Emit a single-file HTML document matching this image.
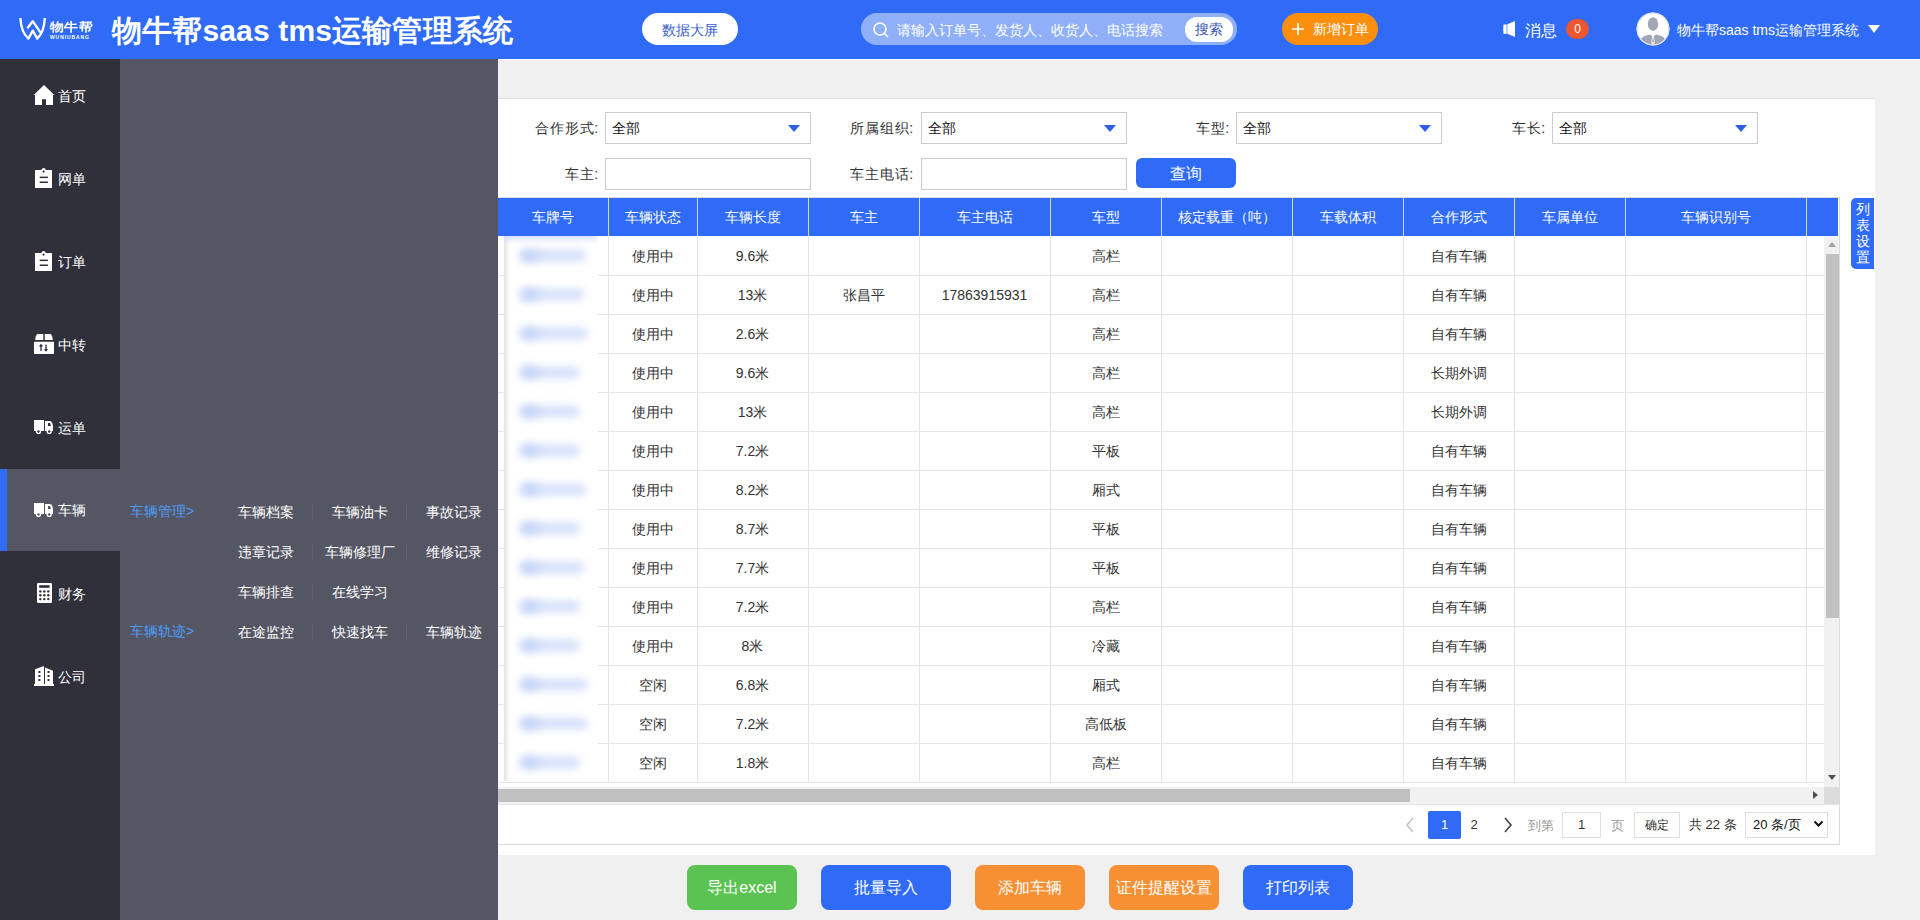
<!DOCTYPE html>
<html><head><meta charset="utf-8">
<style>
*{margin:0;padding:0;box-sizing:border-box;}
html,body{width:1920px;height:920px;overflow:hidden;background:#f0f0f0;font-family:"Liberation Sans",sans-serif;font-size:14px;color:#333;}
.abs{position:absolute;}
#hdr{position:absolute;left:0;top:0;width:1920px;height:59px;background:#2f6bf6;}
#side{position:absolute;left:0;top:59px;width:120px;height:861px;background:#30303a;}
#sub{position:absolute;left:120px;top:59px;width:378px;height:861px;background:#555663;}
.nav{position:absolute;left:0;width:120px;height:83px;color:#fff;font-size:14px;}
.nav .t{position:absolute;left:58px;top:50%;transform:translateY(-50%);line-height:16px;}
.nav svg{position:absolute;left:34px;top:50%;transform:translateY(-50%);}
.nav.on{background:#555663;}
.nav.on:before{content:"";position:absolute;left:0;top:0;width:7px;height:100%;background:#2f6bf6;}
.sm{position:absolute;color:#fff;font-size:14px;line-height:16px;}
.smh{position:absolute;color:#4d9cf8;font-size:14px;line-height:16px;}
.sep{position:absolute;width:1px;height:16px;background:#62636f;}
#panel{position:absolute;left:498px;top:98px;width:1377px;height:757px;background:#fff;border-top:1px solid #ddd;}
.lbl{position:absolute;font-size:14px;color:#333;text-align:right;line-height:16px;letter-spacing:0.8px;}
.sel{position:absolute;width:206px;height:32px;border:1px solid #ccc;background:#fff;font-size:14px;color:#111;line-height:30px;padding-left:6px;}
.sel:after{content:"";position:absolute;right:10px;top:12px;border-left:6px solid transparent;border-right:6px solid transparent;border-top:7px solid #2f5ee8;}
.inp{position:absolute;width:206px;height:32px;border:1px solid #ccc;background:#fff;}
#thead{position:absolute;left:498px;top:198px;width:1340px;height:38px;background:#2f6bf6;}
.th{position:absolute;top:0;height:38px;line-height:38px;text-align:center;color:#fff;font-size:14px;border-right:1px solid #c9d6f5;}
.row{position:absolute;left:498px;width:1308px;height:39px;border-bottom:1px solid #e4e4e4;}
.td{position:absolute;top:0;height:39px;line-height:38px;text-align:center;color:#333;font-size:14px;border-right:1px solid #e4e4e4;}
.btn{position:absolute;top:865px;height:45px;border-radius:8px;color:#fff;font-size:16px;line-height:45px;text-align:center;}
</style></head><body>

<div id="hdr">
  <!-- logo -->
  <svg class="abs" style="left:0;top:0" width="60" height="59" viewBox="0 0 60 59">
    <path d="M20.4 18 Q21 32 28.4 38.6 L32.8 30.6 L37.3 38.6 Q44.2 32 44.8 18" fill="none" stroke="#fff" stroke-width="2.3" stroke-linejoin="round"/>
    <path d="M27.3 28.3 L32.7 21.2 L40.6 32.6" fill="none" stroke="#fff" stroke-width="2.3" stroke-linejoin="round"/>
  </svg>
  <div class="abs" style="left:50px;top:20px;color:#fff;font-size:14px;font-weight:bold;line-height:14px;letter-spacing:0px;transform-origin:0 0;transform:scale(1.02,0.88);">物牛帮</div>
  <div class="abs" style="left:50px;top:35px;color:#fff;font-size:5px;font-weight:bold;line-height:5px;letter-spacing:0.9px;">WUNIUBANG</div>
  <div class="abs" style="left:112px;top:14px;color:#fff;font-size:30px;font-weight:bold;line-height:34px;letter-spacing:0.15px;">物牛帮saas tms运输管理系统</div>

  <div class="abs" style="left:642px;top:13px;width:96px;height:32px;border-radius:16px;background:#fff;color:#3b5fcf;font-size:14px;line-height:34px;text-align:center;">数据大屏</div>

  <div class="abs" style="left:861px;top:13px;width:376px;height:32px;border-radius:16px;background:#8fb0f9;"></div>
  <svg class="abs" style="left:872px;top:21px" width="18" height="18" viewBox="0 0 18 18"><circle cx="8" cy="8" r="6" fill="none" stroke="#fff" stroke-width="1.6"/><path d="M12.5 12.5 L16 16" stroke="#fff" stroke-width="1.6"/></svg>
  <div class="abs" style="left:897px;top:22px;color:#fff;font-size:14px;line-height:16px;">请输入订单号、发货人、收货人、电话搜索</div>
  <div class="abs" style="left:1185px;top:17px;width:48px;height:25px;border-radius:12px;background:#fff;color:#3a56b4;font-size:14px;line-height:25px;text-align:center;">搜索</div>

  <div class="abs" style="left:1282px;top:13px;width:96px;height:32px;border-radius:16px;background:#fc8f0e;color:#fff;font-size:14px;line-height:32px;text-align:center;">
    <svg style="position:absolute;left:10px;top:10px" width="12" height="12" viewBox="0 0 12 12"><path d="M6 0 V12 M0 6 H12" stroke="#fff" stroke-width="1.7"/></svg><span style="position:absolute;left:31px;top:0">新增订单</span></div>

  <svg class="abs" style="left:1502px;top:20px" width="15" height="18" viewBox="0 0 15 18"><path d="M1.5 4.5 H4.6 V14 H1.5 Q0.8 9.2 1.5 4.5Z" fill="#fff"/><path d="M5.3 4.3 L13 1 V17 L5.3 13.7Z" fill="#fff"/></svg>
  <div class="abs" style="left:1525px;top:22px;color:#fff;font-size:16px;line-height:18px;">消息</div>
  <div class="abs" style="left:1566px;top:19px;width:23px;height:20px;border-radius:10px;background:#ec5630;color:#fff;font-size:12px;line-height:20px;text-align:center;">0</div>

  <svg class="abs" style="left:1636px;top:12px" width="34" height="34" viewBox="0 0 34 34">
    <defs><clipPath id="avc"><circle cx="17" cy="17" r="15.5"/></clipPath></defs>
    <circle cx="17" cy="17" r="16.5" fill="#fff"/>
    <g clip-path="url(#avc)">
    <ellipse cx="17" cy="12" rx="5.2" ry="6.8" fill="#a3a6b4"/>
    <path d="M3 34 Q4 25 10 23.5 L14 22.5 L17 25 L20 22.5 L24 23.5 Q30 25 31 34Z" fill="#a3a6b4"/>
    <path d="M16 24.5 L18 24.5 L18.6 31 L17 32.5 L15.4 31Z" fill="#fff"/>
    <path d="M16.5 26 L17.5 26 L17.8 30 L17 31 L16.2 30Z" fill="#a3a6b4"/>
    </g>
    <circle cx="17" cy="17" r="16" fill="none" stroke="#d6d8e2" stroke-width="1"/>
  </svg>
  <div class="abs" style="left:1677px;top:22px;color:#fff;font-size:14px;line-height:16px;">物牛帮saas tms运输管理系统</div>
  <div class="abs" style="left:1868px;top:25px;border-left:6px solid transparent;border-right:6px solid transparent;border-top:8px solid #fff;"></div>
</div>

<div id="side">
  <div class="nav" style="top:-5px"><span class="t">首页</span></div>
  <div class="nav" style="top:78px"><span class="t">网单</span></div>
  <div class="nav" style="top:161px"><span class="t">订单</span></div>
  <div class="nav" style="top:244px"><span class="t">中转</span></div>
  <div class="nav" style="top:327px"><span class="t">运单</span></div>
  <div class="nav on" style="top:410px;height:82px"><span class="t">车辆</span></div>
  <div class="nav" style="top:493px"><span class="t">财务</span></div>
  <div class="nav" style="top:576px"><span class="t">公司</span></div>
</div>

<svg class="abs" style="left:0;top:0;pointer-events:none" width="120" height="920" viewBox="0 0 120 920">
<path d="M44 85 L54.3 95 H53 V105 H46 V99.2 H42 V105 H35 V95 H33.7Z" fill="#fff"/>
<path d="M35 170 H41.2 Q42 168 43.6 168 Q45.2 168 46 170 H52 V188 H35Z" fill="#fff"/>
<circle cx="43.6" cy="171.6" r="1.1" fill="#30303a"/>
<rect x="39.7" y="176.6" width="8.2" height="1.5" fill="#30303a"/>
<rect x="39.7" y="181.5" width="8.2" height="1.5" fill="#30303a"/>
<path d="M35 253 H41.2 Q42 251 43.6 251 Q45.2 251 46 253 H52 V271 H35Z" fill="#fff"/>
<circle cx="43.6" cy="254.6" r="1.1" fill="#30303a"/>
<rect x="39.7" y="259.6" width="8.2" height="1.5" fill="#30303a"/>
<rect x="39.7" y="264.5" width="8.2" height="1.5" fill="#30303a"/>
<path d="M37 334 H43.3 V340 H35.2 Q35.5 336 37 334Z M44.8 334 H51 Q52.5 336 52.8 340 H44.8Z" fill="#fff"/>
<rect x="34" y="341.7" width="20" height="12.3" rx="0.8" fill="#fff"/>
<path d="M41 351 V345 M39.6 346.4 L41 344.8 L42.4 346.4 M46 344.5 V350.5 M44.6 349.1 L46 350.7 L47.4 349.1" stroke="#30303a" stroke-width="1.3" fill="none"/>
<path d="M34 420 H44 V431 H34Z" fill="#fff"/>
<path d="M45 421 H50 Q51.5 421 52.2 423 L53 426 V431 H45Z" fill="#fff"/>
<path d="M48 423 H50 L51 426 H48Z" fill="#30303a"/>
<circle cx="38.5" cy="431.5" r="2.6" fill="#fff"/><circle cx="38.5" cy="431.5" r="1.2" fill="#30303a"/>
<circle cx="49.2" cy="431.5" r="2.6" fill="#fff"/><circle cx="49.2" cy="431.5" r="1.2" fill="#30303a"/>
<path d="M34 503 H44 V514 H34Z" fill="#fff"/>
<path d="M45 504 H50 Q51.5 504 52.2 506 L53 509 V514 H45Z" fill="#fff"/>
<path d="M48 506 H50 L51 509 H48Z" fill="#555663"/>
<circle cx="38.5" cy="514.5" r="2.6" fill="#fff"/><circle cx="38.5" cy="514.5" r="1.2" fill="#555663"/>
<circle cx="49.2" cy="514.5" r="2.6" fill="#fff"/><circle cx="49.2" cy="514.5" r="1.2" fill="#555663"/>
<rect x="37" y="583" width="15" height="20" rx="1.2" fill="#fff"/>
<rect x="39.2" y="585.2" width="10.4" height="2.6" fill="#30303a"/>
<circle cx="40.3" cy="591.4" r="1.2" fill="#30303a"/><circle cx="40.3" cy="595.3" r="1.2" fill="#30303a"/><circle cx="40.3" cy="599.1" r="1.2" fill="#30303a"/><circle cx="44.3" cy="591.4" r="1.2" fill="#30303a"/><circle cx="44.3" cy="595.3" r="1.2" fill="#30303a"/><circle cx="44.3" cy="599.1" r="1.2" fill="#30303a"/><circle cx="48.3" cy="591.4" r="1.2" fill="#30303a"/><circle cx="48.3" cy="595.3" r="1.2" fill="#30303a"/><circle cx="48.3" cy="599.1" r="1.2" fill="#30303a"/>
<path d="M35 669.3 L44 666 V684 H35Z M45 667.4 L53 670.8 V684 H45Z" fill="#fff"/>
<rect x="34" y="684" width="20" height="2" fill="#fff"/>
<rect x="38.4" y="671" width="2" height="2" fill="#30303a"/><rect x="38.4" y="675" width="2" height="2" fill="#30303a"/><rect x="38.4" y="679" width="2" height="2" fill="#30303a"/><rect x="47.5" y="671" width="2" height="2" fill="#30303a"/><rect x="47.5" y="675" width="2" height="2" fill="#30303a"/><rect x="47.5" y="679" width="2" height="2" fill="#30303a"/>
</svg>
<div id="sub">
  <div class="smh" style="left:10px;top:444px">车辆管理&gt;</div>
  <div class="smh" style="left:10px;top:564px">车辆轨迹&gt;</div>
</div>

<div class="abs" style="left:498px;top:59px;width:1422px;height:1px;background:#fafeff"></div>
<div id="panel"></div>
<div class="lbl" style="left:479px;width:120px;top:120px">合作形式:</div>
<div class="sel" style="left:605px;top:112px">全部</div>
<div class="lbl" style="left:794px;width:120px;top:120px">所属组织:</div>
<div class="sel" style="left:921px;top:112px">全部</div>
<div class="lbl" style="left:1110px;width:120px;top:120px">车型:</div>
<div class="sel" style="left:1236px;top:112px">全部</div>
<div class="lbl" style="left:1426px;width:120px;top:120px">车长:</div>
<div class="sel" style="left:1552px;top:112px">全部</div>
<div class="lbl" style="left:479px;width:120px;top:166px">车主:</div>
<div class="inp" style="left:605px;top:158px"></div>
<div class="lbl" style="left:794px;width:120px;top:166px">车主电话:</div>
<div class="inp" style="left:921px;top:158px"></div>
<div class="abs" style="left:1136px;top:158px;width:100px;height:30px;border-radius:6px;background:#2f6bf6;color:#fff;font-size:16px;line-height:31px;text-align:center;">查询</div>
<div class="abs" style="left:498px;top:197px;width:1342px;height:648px;border:1px solid #dcdcdc;border-left:none;background:#fff"></div>
<div id="thead"><div class="th" style="left:0px;width:111px;">车牌号</div><div class="th" style="left:110px;width:90px;">车辆状态</div><div class="th" style="left:199px;width:112px;">车辆长度</div><div class="th" style="left:310px;width:112px;">车主</div><div class="th" style="left:421px;width:132px;">车主电话</div><div class="th" style="left:552px;width:112px;">车型</div><div class="th" style="left:663px;width:132px;">核定载重（吨）</div><div class="th" style="left:794px;width:112px;">车载体积</div><div class="th" style="left:905px;width:112px;">合作形式</div><div class="th" style="left:1016px;width:112px;">车属单位</div><div class="th" style="left:1127px;width:182px;">车辆识别号</div><div class="th" style="left:1308px;width:34px;border-right:none;"></div></div>
<div class="row" style="top:237px;width:1326px"><div class="td" style="left:0px;width:111px;"></div><div class="td" style="left:110px;width:90px;">使用中</div><div class="td" style="left:199px;width:112px;">9.6米</div><div class="td" style="left:310px;width:112px;"></div><div class="td" style="left:421px;width:132px;"></div><div class="td" style="left:552px;width:112px;">高栏</div><div class="td" style="left:663px;width:132px;"></div><div class="td" style="left:794px;width:112px;"></div><div class="td" style="left:905px;width:112px;">自有车辆</div><div class="td" style="left:1016px;width:112px;"></div><div class="td" style="left:1127px;width:182px;"></div><div class="td" style="left:1308px;width:19px;"></div></div>
<div class="row" style="top:276px;width:1326px"><div class="td" style="left:0px;width:111px;"></div><div class="td" style="left:110px;width:90px;">使用中</div><div class="td" style="left:199px;width:112px;">13米</div><div class="td" style="left:310px;width:112px;">张昌平</div><div class="td" style="left:421px;width:132px;">17863915931</div><div class="td" style="left:552px;width:112px;">高栏</div><div class="td" style="left:663px;width:132px;"></div><div class="td" style="left:794px;width:112px;"></div><div class="td" style="left:905px;width:112px;">自有车辆</div><div class="td" style="left:1016px;width:112px;"></div><div class="td" style="left:1127px;width:182px;"></div><div class="td" style="left:1308px;width:19px;"></div></div>
<div class="row" style="top:315px;width:1326px"><div class="td" style="left:0px;width:111px;"></div><div class="td" style="left:110px;width:90px;">使用中</div><div class="td" style="left:199px;width:112px;">2.6米</div><div class="td" style="left:310px;width:112px;"></div><div class="td" style="left:421px;width:132px;"></div><div class="td" style="left:552px;width:112px;">高栏</div><div class="td" style="left:663px;width:132px;"></div><div class="td" style="left:794px;width:112px;"></div><div class="td" style="left:905px;width:112px;">自有车辆</div><div class="td" style="left:1016px;width:112px;"></div><div class="td" style="left:1127px;width:182px;"></div><div class="td" style="left:1308px;width:19px;"></div></div>
<div class="row" style="top:354px;width:1326px"><div class="td" style="left:0px;width:111px;"></div><div class="td" style="left:110px;width:90px;">使用中</div><div class="td" style="left:199px;width:112px;">9.6米</div><div class="td" style="left:310px;width:112px;"></div><div class="td" style="left:421px;width:132px;"></div><div class="td" style="left:552px;width:112px;">高栏</div><div class="td" style="left:663px;width:132px;"></div><div class="td" style="left:794px;width:112px;"></div><div class="td" style="left:905px;width:112px;">长期外调</div><div class="td" style="left:1016px;width:112px;"></div><div class="td" style="left:1127px;width:182px;"></div><div class="td" style="left:1308px;width:19px;"></div></div>
<div class="row" style="top:393px;width:1326px"><div class="td" style="left:0px;width:111px;"></div><div class="td" style="left:110px;width:90px;">使用中</div><div class="td" style="left:199px;width:112px;">13米</div><div class="td" style="left:310px;width:112px;"></div><div class="td" style="left:421px;width:132px;"></div><div class="td" style="left:552px;width:112px;">高栏</div><div class="td" style="left:663px;width:132px;"></div><div class="td" style="left:794px;width:112px;"></div><div class="td" style="left:905px;width:112px;">长期外调</div><div class="td" style="left:1016px;width:112px;"></div><div class="td" style="left:1127px;width:182px;"></div><div class="td" style="left:1308px;width:19px;"></div></div>
<div class="row" style="top:432px;width:1326px"><div class="td" style="left:0px;width:111px;"></div><div class="td" style="left:110px;width:90px;">使用中</div><div class="td" style="left:199px;width:112px;">7.2米</div><div class="td" style="left:310px;width:112px;"></div><div class="td" style="left:421px;width:132px;"></div><div class="td" style="left:552px;width:112px;">平板</div><div class="td" style="left:663px;width:132px;"></div><div class="td" style="left:794px;width:112px;"></div><div class="td" style="left:905px;width:112px;">自有车辆</div><div class="td" style="left:1016px;width:112px;"></div><div class="td" style="left:1127px;width:182px;"></div><div class="td" style="left:1308px;width:19px;"></div></div>
<div class="row" style="top:471px;width:1326px"><div class="td" style="left:0px;width:111px;"></div><div class="td" style="left:110px;width:90px;">使用中</div><div class="td" style="left:199px;width:112px;">8.2米</div><div class="td" style="left:310px;width:112px;"></div><div class="td" style="left:421px;width:132px;"></div><div class="td" style="left:552px;width:112px;">厢式</div><div class="td" style="left:663px;width:132px;"></div><div class="td" style="left:794px;width:112px;"></div><div class="td" style="left:905px;width:112px;">自有车辆</div><div class="td" style="left:1016px;width:112px;"></div><div class="td" style="left:1127px;width:182px;"></div><div class="td" style="left:1308px;width:19px;"></div></div>
<div class="row" style="top:510px;width:1326px"><div class="td" style="left:0px;width:111px;"></div><div class="td" style="left:110px;width:90px;">使用中</div><div class="td" style="left:199px;width:112px;">8.7米</div><div class="td" style="left:310px;width:112px;"></div><div class="td" style="left:421px;width:132px;"></div><div class="td" style="left:552px;width:112px;">平板</div><div class="td" style="left:663px;width:132px;"></div><div class="td" style="left:794px;width:112px;"></div><div class="td" style="left:905px;width:112px;">自有车辆</div><div class="td" style="left:1016px;width:112px;"></div><div class="td" style="left:1127px;width:182px;"></div><div class="td" style="left:1308px;width:19px;"></div></div>
<div class="row" style="top:549px;width:1326px"><div class="td" style="left:0px;width:111px;"></div><div class="td" style="left:110px;width:90px;">使用中</div><div class="td" style="left:199px;width:112px;">7.7米</div><div class="td" style="left:310px;width:112px;"></div><div class="td" style="left:421px;width:132px;"></div><div class="td" style="left:552px;width:112px;">平板</div><div class="td" style="left:663px;width:132px;"></div><div class="td" style="left:794px;width:112px;"></div><div class="td" style="left:905px;width:112px;">自有车辆</div><div class="td" style="left:1016px;width:112px;"></div><div class="td" style="left:1127px;width:182px;"></div><div class="td" style="left:1308px;width:19px;"></div></div>
<div class="row" style="top:588px;width:1326px"><div class="td" style="left:0px;width:111px;"></div><div class="td" style="left:110px;width:90px;">使用中</div><div class="td" style="left:199px;width:112px;">7.2米</div><div class="td" style="left:310px;width:112px;"></div><div class="td" style="left:421px;width:132px;"></div><div class="td" style="left:552px;width:112px;">高栏</div><div class="td" style="left:663px;width:132px;"></div><div class="td" style="left:794px;width:112px;"></div><div class="td" style="left:905px;width:112px;">自有车辆</div><div class="td" style="left:1016px;width:112px;"></div><div class="td" style="left:1127px;width:182px;"></div><div class="td" style="left:1308px;width:19px;"></div></div>
<div class="row" style="top:627px;width:1326px"><div class="td" style="left:0px;width:111px;"></div><div class="td" style="left:110px;width:90px;">使用中</div><div class="td" style="left:199px;width:112px;">8米</div><div class="td" style="left:310px;width:112px;"></div><div class="td" style="left:421px;width:132px;"></div><div class="td" style="left:552px;width:112px;">冷藏</div><div class="td" style="left:663px;width:132px;"></div><div class="td" style="left:794px;width:112px;"></div><div class="td" style="left:905px;width:112px;">自有车辆</div><div class="td" style="left:1016px;width:112px;"></div><div class="td" style="left:1127px;width:182px;"></div><div class="td" style="left:1308px;width:19px;"></div></div>
<div class="row" style="top:666px;width:1326px"><div class="td" style="left:0px;width:111px;"></div><div class="td" style="left:110px;width:90px;">空闲</div><div class="td" style="left:199px;width:112px;">6.8米</div><div class="td" style="left:310px;width:112px;"></div><div class="td" style="left:421px;width:132px;"></div><div class="td" style="left:552px;width:112px;">厢式</div><div class="td" style="left:663px;width:132px;"></div><div class="td" style="left:794px;width:112px;"></div><div class="td" style="left:905px;width:112px;">自有车辆</div><div class="td" style="left:1016px;width:112px;"></div><div class="td" style="left:1127px;width:182px;"></div><div class="td" style="left:1308px;width:19px;"></div></div>
<div class="row" style="top:705px;width:1326px"><div class="td" style="left:0px;width:111px;"></div><div class="td" style="left:110px;width:90px;">空闲</div><div class="td" style="left:199px;width:112px;">7.2米</div><div class="td" style="left:310px;width:112px;"></div><div class="td" style="left:421px;width:132px;"></div><div class="td" style="left:552px;width:112px;">高低板</div><div class="td" style="left:663px;width:132px;"></div><div class="td" style="left:794px;width:112px;"></div><div class="td" style="left:905px;width:112px;">自有车辆</div><div class="td" style="left:1016px;width:112px;"></div><div class="td" style="left:1127px;width:182px;"></div><div class="td" style="left:1308px;width:19px;"></div></div>
<div class="row" style="top:744px;width:1326px"><div class="td" style="left:0px;width:111px;"></div><div class="td" style="left:110px;width:90px;">空闲</div><div class="td" style="left:199px;width:112px;">1.8米</div><div class="td" style="left:310px;width:112px;"></div><div class="td" style="left:421px;width:132px;"></div><div class="td" style="left:552px;width:112px;">高栏</div><div class="td" style="left:663px;width:132px;"></div><div class="td" style="left:794px;width:112px;"></div><div class="td" style="left:905px;width:112px;">自有车辆</div><div class="td" style="left:1016px;width:112px;"></div><div class="td" style="left:1127px;width:182px;"></div><div class="td" style="left:1308px;width:19px;"></div></div>



<!-- submenu items -->
<div class="abs" style="left:120px;top:58px;width:378px;height:862px;">
<div class="sm" style="left:118px;top:446px">车辆档案</div><div class="sm" style="left:212px;top:446px">车辆油卡</div><div class="sm" style="left:306px;top:446px">事故记录</div><div class="sep" style="left:192px;top:446px"></div><div class="sep" style="left:286px;top:446px"></div>
<div class="sm" style="left:118px;top:486px">违章记录</div><div class="sm" style="left:205px;top:486px">车辆修理厂</div><div class="sm" style="left:306px;top:486px">维修记录</div><div class="sep" style="left:192px;top:486px"></div><div class="sep" style="left:286px;top:486px"></div>
<div class="sm" style="left:118px;top:526px">车辆排查</div><div class="sm" style="left:212px;top:526px">在线学习</div><div class="sep" style="left:192px;top:526px"></div>
<div class="sm" style="left:118px;top:566px">在途监控</div><div class="sm" style="left:212px;top:566px">快速找车</div><div class="sm" style="left:306px;top:566px">车辆轨迹</div><div class="sep" style="left:192px;top:566px"></div><div class="sep" style="left:286px;top:566px"></div>
</div>
<div class="abs" style="left:504px;top:236px;width:94px;height:546px;background:#fff;overflow:hidden"><div class="abs" style="left:0;top:0;width:6px;height:545px;background:linear-gradient(90deg,#e4e4e4,#fff)"></div><div class="abs" style="left:0;top:-4px;width:93px;height:12px;background:linear-gradient(#c8d6fa,rgba(255,255,255,0));filter:blur(1.5px)"></div><div class="abs" style="left:16px;top:14px;width:66px;height:11px;border-radius:6px;background:#d3defa;filter:blur(4px)"></div><div class="abs" style="left:17px;top:14px;width:18px;height:11px;border-radius:6px;background:#c6d5f9;filter:blur(4px)"></div><div class="abs" style="left:16px;top:53px;width:64px;height:11px;border-radius:6px;background:#d3defa;filter:blur(4px)"></div><div class="abs" style="left:17px;top:53px;width:18px;height:11px;border-radius:6px;background:#c6d5f9;filter:blur(4px)"></div><div class="abs" style="left:16px;top:92px;width:68px;height:11px;border-radius:6px;background:#d3defa;filter:blur(4px)"></div><div class="abs" style="left:17px;top:92px;width:18px;height:11px;border-radius:6px;background:#c6d5f9;filter:blur(4px)"></div><div class="abs" style="left:16px;top:131px;width:60px;height:11px;border-radius:6px;background:#d3defa;filter:blur(4px)"></div><div class="abs" style="left:17px;top:131px;width:18px;height:11px;border-radius:6px;background:#c6d5f9;filter:blur(4px)"></div><div class="abs" style="left:16px;top:170px;width:60px;height:11px;border-radius:6px;background:#d3defa;filter:blur(4px)"></div><div class="abs" style="left:17px;top:170px;width:18px;height:11px;border-radius:6px;background:#c6d5f9;filter:blur(4px)"></div><div class="abs" style="left:16px;top:209px;width:60px;height:11px;border-radius:6px;background:#d3defa;filter:blur(4px)"></div><div class="abs" style="left:17px;top:209px;width:18px;height:11px;border-radius:6px;background:#c6d5f9;filter:blur(4px)"></div><div class="abs" style="left:16px;top:248px;width:66px;height:11px;border-radius:6px;background:#d3defa;filter:blur(4px)"></div><div class="abs" style="left:17px;top:248px;width:18px;height:11px;border-radius:6px;background:#c6d5f9;filter:blur(4px)"></div><div class="abs" style="left:16px;top:287px;width:60px;height:11px;border-radius:6px;background:#d3defa;filter:blur(4px)"></div><div class="abs" style="left:17px;top:287px;width:18px;height:11px;border-radius:6px;background:#c6d5f9;filter:blur(4px)"></div><div class="abs" style="left:16px;top:326px;width:64px;height:11px;border-radius:6px;background:#d3defa;filter:blur(4px)"></div><div class="abs" style="left:17px;top:326px;width:18px;height:11px;border-radius:6px;background:#c6d5f9;filter:blur(4px)"></div><div class="abs" style="left:16px;top:365px;width:60px;height:11px;border-radius:6px;background:#d3defa;filter:blur(4px)"></div><div class="abs" style="left:17px;top:365px;width:18px;height:11px;border-radius:6px;background:#c6d5f9;filter:blur(4px)"></div><div class="abs" style="left:16px;top:404px;width:60px;height:11px;border-radius:6px;background:#d3defa;filter:blur(4px)"></div><div class="abs" style="left:17px;top:404px;width:18px;height:11px;border-radius:6px;background:#c6d5f9;filter:blur(4px)"></div><div class="abs" style="left:16px;top:443px;width:68px;height:11px;border-radius:6px;background:#d3defa;filter:blur(4px)"></div><div class="abs" style="left:17px;top:443px;width:18px;height:11px;border-radius:6px;background:#c6d5f9;filter:blur(4px)"></div><div class="abs" style="left:16px;top:482px;width:68px;height:11px;border-radius:6px;background:#d3defa;filter:blur(4px)"></div><div class="abs" style="left:17px;top:482px;width:18px;height:11px;border-radius:6px;background:#c6d5f9;filter:blur(4px)"></div><div class="abs" style="left:16px;top:521px;width:60px;height:11px;border-radius:6px;background:#d3defa;filter:blur(4px)"></div><div class="abs" style="left:17px;top:521px;width:18px;height:11px;border-radius:6px;background:#c6d5f9;filter:blur(4px)"></div></div>
<div class="abs" style="left:1824px;top:236px;width:15px;height:551px;background:#f1f1f1;"></div>
<div class="abs" style="left:1826px;top:254px;width:13px;height:364px;background:#c1c1c1;"></div>
<div class="abs" style="left:1828px;top:242px;border-left:4px solid transparent;border-right:4px solid transparent;border-bottom:5px solid #a3a3a3;"></div>
<div class="abs" style="left:1828px;top:775px;border-left:4px solid transparent;border-right:4px solid transparent;border-top:5px solid #505050;"></div>
<!-- horizontal scrollbar -->
<div class="abs" style="left:498px;top:787px;width:1341px;height:17px;background:#f1f1f1;"></div>
<div class="abs" style="left:498px;top:789px;width:912px;height:13px;background:#c1c1c1;"></div>
<div class="abs" style="left:1824px;top:787px;width:15px;height:17px;background:#dcdcdc;"></div>
<div class="abs" style="left:1813px;top:791px;border-top:4px solid transparent;border-bottom:4px solid transparent;border-left:5px solid #505050;"></div>
<div class="abs" style="left:498px;top:804px;width:1341px;height:1px;background:#e6e6e6;"></div>
<!-- list setting tab -->
<div class="abs" style="left:1851px;top:198px;width:23px;height:71px;background:#2f6bf6;border-radius:5px 0 0 5px;color:#fff;font-size:14px;line-height:16px;text-align:center;padding-top:3px;">列<br>表<br>设<br>置</div>
<!-- pagination -->
<svg class="abs" style="left:1405px;top:817px" width="10" height="16" viewBox="0 0 10 16"><path d="M8 1 L2 8 L8 15" fill="none" stroke="#c0c4cc" stroke-width="1.6"/></svg>
<div class="abs" style="left:1428px;top:811px;width:33px;height:28px;background:#2f6bf6;border-radius:2px;color:#fff;font-size:13px;line-height:28px;text-align:center;">1</div>
<div class="abs" style="left:1462px;top:811px;width:24px;height:28px;color:#333;font-size:13px;line-height:28px;text-align:center;">2</div>
<svg class="abs" style="left:1503px;top:817px" width="10" height="16" viewBox="0 0 10 16"><path d="M2 1 L8 8 L2 15" fill="none" stroke="#444" stroke-width="1.6"/></svg>
<div class="abs" style="left:1528px;top:818px;color:#999;font-size:13px;line-height:15px;">到第</div>
<div class="abs" style="left:1562px;top:812px;width:39px;height:26px;border:1px solid #dcdfe6;color:#333;font-size:13px;line-height:24px;text-align:center;">1</div>
<div class="abs" style="left:1611px;top:818px;color:#999;font-size:13px;line-height:15px;">页</div>
<div class="abs" style="left:1634px;top:812px;width:46px;height:26px;border:1px solid #dcdfe6;color:#333;font-size:12px;line-height:25px;text-align:center;">确定</div>
<div class="abs" style="left:1689px;top:817px;color:#333;font-size:13px;line-height:15px;">共 22 条</div>
<div class="abs" style="left:1745px;top:812px;width:83px;height:26px;border:1px solid #dcdfe6;color:#111;font-size:13px;line-height:24px;padding-left:7px;">20 条/页</div>
<svg class="abs" style="left:1813px;top:820px" width="11" height="8" viewBox="0 0 11 8"><path d="M1.5 1.5 L5.5 5.5 L9.5 1.5" fill="none" stroke="#111" stroke-width="2"/></svg>
<!-- bottom buttons -->
<div class="btn" style="left:687px;width:110px;background:#5bc352;">导出excel</div>
<div class="btn" style="left:821px;width:130px;background:#2f6bf6;">批量导入</div>
<div class="btn" style="left:975px;width:110px;background:#f78f33;">添加车辆</div>
<div class="btn" style="left:1109px;width:110px;background:#f78f33;">证件提醒设置</div>
<div class="btn" style="left:1243px;width:110px;background:#2f6bf6;">打印列表</div>
</body></html>
